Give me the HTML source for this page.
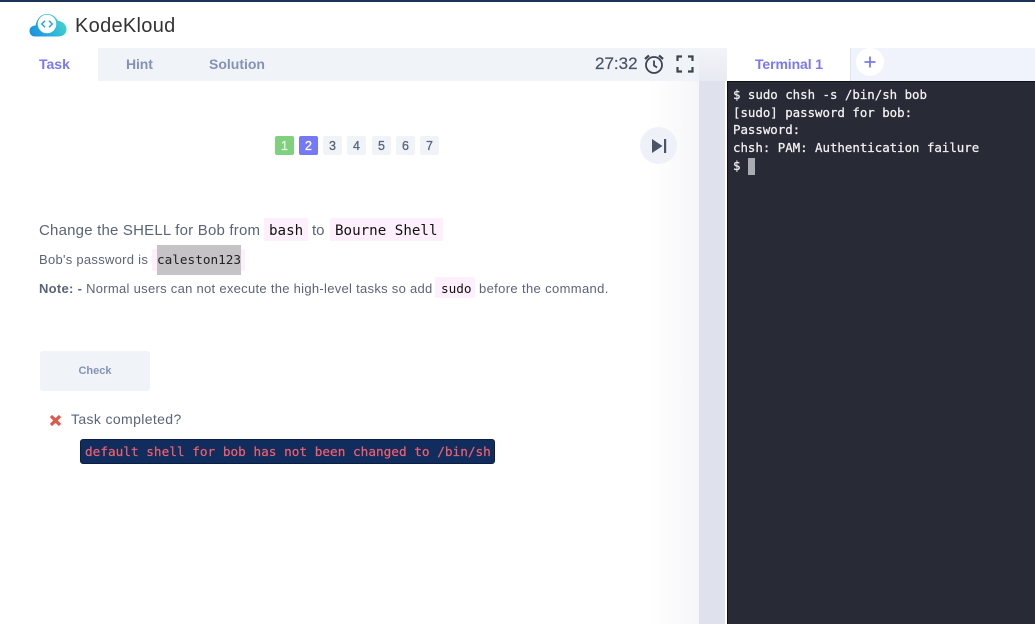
<!DOCTYPE html>
<html><head><meta charset="utf-8">
<style>
html,body{margin:0;padding:0;width:1035px;height:624px;overflow:hidden;background:#fff}
body{position:relative;font-family:"Liberation Sans",sans-serif;color:#5b6478}
.a{position:absolute;white-space:nowrap}
.m{font-family:"DejaVu Sans Mono","Liberation Mono",monospace}
.n{width:19px;height:19px;border-radius:2px;background:#f0f4f9;color:#5b6478;font-size:12.500px;text-align:center;line-height:20px;top:136px;position:absolute;-webkit-text-stroke:.3px currentColor}
.c{position:absolute;background:#fdeffb;border-radius:2px}
</style></head><body>
<div class="a" style="left:0;top:0;width:1035px;height:2px;background:#1c3157"></div>

<svg class="a" style="left:29px;top:13px" width="38" height="25" viewBox="0 0 38 25">
<defs><linearGradient id="g" x1="0" y1="0.700" x2="1" y2="0.300"><stop offset="0" stop-color="#1b94e0"/><stop offset=".5" stop-color="#2bb4dc"/><stop offset="1" stop-color="#47d8c8"/></linearGradient></defs>
<path d="M6 23.500C2.500 23.500 .5 21 .5 18C.5 14.500 3 12.500 6.500 12.500C8 5.500 12 1 18 1C23 1 27 4 29 8C34 8 37.500 12 37.500 16.500C37.500 21 33.500 23.500 29 23.500Z" fill="url(#g)"/>
<circle cx="18" cy="11" r="9.300" fill="#fff"/>
<path d="M16 7.800L12.800 11L16 14.200M20 7.800L23.200 11L20 14.200" fill="none" stroke="#25a9e3" stroke-width="1.500"/>
</svg>
<div class="a" style="left:75px;top:14px;font-size:20px;line-height:24px;color:#333;letter-spacing:.3px">KodeKloud</div>

<div class="a" style="left:98px;top:48px;width:601px;height:33px;background:#f0f4f9"></div>
<div class="a" style="left:39px;top:56px;font-size:14px;line-height:16px;font-weight:bold;color:#7b78f5">Task</div>
<div class="a" style="left:126px;top:56px;font-size:14px;line-height:16px;font-weight:bold;color:#8492b8;letter-spacing:-.1px">Hint</div>
<div class="a" style="left:209px;top:56px;font-size:14px;line-height:16px;font-weight:bold;color:#8492b8">Solution</div>
<div class="a" style="left:595px;top:54px;font-size:17px;line-height:20px;color:#4a5266;-webkit-text-stroke:.2px #4a5266">27:32</div>
<svg class="a" style="left:643px;top:53px" width="22" height="22" viewBox="0 0 22 22" fill="none" stroke="#3d4456" stroke-width="1.800">
<circle cx="11" cy="12" r="8"/><path d="M11 7.500V12.500L14 14.500"/><path d="M2 6L6 2.500M20 6L16 2.500" stroke-width="2.200"/>
</svg>
<svg class="a" style="left:676px;top:55px" width="18" height="18" viewBox="0 0 18 18" fill="none" stroke="#3d4456" stroke-width="2.200">
<path d="M1.500 6V1.500H6M12 1.500H16.500V6M16.500 12V16.500H12M6 16.500H1.500V12"/>
</svg>

<div class="a" style="left:699px;top:81px;width:26px;height:543px;background:#dfe2ec"></div>
<div class="a" style="left:648px;top:81px;width:51px;height:543px;background:linear-gradient(90deg,#fff,#f6f6f9)"></div>
<div class="a" style="left:699px;top:48px;width:28px;height:33px;background:linear-gradient(180deg,#f2f4f8,#e8eaf2)"></div>

<div class="a" style="left:850px;top:48px;width:185px;height:33px;background:#f0f3fb"></div>
<div class="a" style="left:727px;top:48px;width:123px;height:33px;background:#fff;border-radius:8px 0 0 0"></div>
<div class="a" style="left:850px;top:48px;width:1px;height:33px;background:#dfe3f7"></div>
<div class="a" style="left:755px;top:56px;font-size:14px;line-height:16px;font-weight:bold;color:#7b78f5;letter-spacing:-.1px">Terminal 1</div>
<svg class="a" style="left:856px;top:48px" width="28" height="28" viewBox="0 0 28 28">
<circle cx="14" cy="14" r="14" fill="#fff"/><path d="M14 8.500V19.500M8.500 14H19.500" stroke="#7b78f5" stroke-width="1.800"/></svg>

<div class="n" style="left:275px;background:#80d080;color:#e8fbe8">1</div>
<div class="n" style="left:299px;background:#7579f5;color:#fff">2</div>
<div class="n" style="left:323px">3</div>
<div class="n" style="left:347px">4</div>
<div class="n" style="left:372px">5</div>
<div class="n" style="left:396px">6</div>
<div class="n" style="left:420px">7</div>
<div class="a" style="left:640px;top:127px;width:37px;height:37px;border-radius:50%;background:#eef2f8"></div>
<svg class="a" style="left:651px;top:138px" width="16" height="16" viewBox="0 0 16 16"><path d="M1 1L11.500 8L1 15Z" fill="#4b5468"/><rect x="13" y="1" width="2.200" height="14" fill="#4b5468"/></svg>

<div class="a" style="left:39px;top:222px;font-size:15px;line-height:18px;letter-spacing:.2px">Change the SHELL for Bob from</div>
<div class="c" style="left:264px;top:218px;width:44px;height:23px"></div>
<div class="a m" style="left:269px;top:222px;font-size:14.200px;line-height:18px;color:#111">bash</div>
<div class="a" style="left:312px;top:222px;font-size:15px;line-height:18px">to</div>
<div class="c" style="left:330px;top:218px;width:113px;height:23px"></div>
<div class="a m" style="left:335px;top:222px;font-size:14.200px;line-height:18px;color:#111">Bourne Shell</div>

<div class="a" style="left:39px;top:252px;font-size:13px;line-height:16px;letter-spacing:.28px">Bob's password is</div>
<div class="c" style="left:152px;top:249px;width:93px;height:22px"></div>
<div class="a" style="left:157px;top:245px;width:84px;height:30px;background:#c5c3c5"></div>
<div class="a m" style="left:157px;top:252px;font-size:12.700px;line-height:16px;color:#222">caleston123</div>

<div class="a" style="left:39px;top:281px;font-size:13px;line-height:16px;letter-spacing:.29px"><b>Note: -</b> Normal users can not execute the high-level tasks so add</div>
<div class="c" style="left:435px;top:277px;width:40px;height:21px"></div>
<div class="a m" style="left:441px;top:281px;font-size:12.700px;line-height:16px;color:#111">sudo</div>
<div class="a" style="left:479px;top:281px;font-size:13px;line-height:16px;letter-spacing:.36px">before the command.</div>

<div class="a" style="left:40px;top:351px;width:110px;height:40px;background:#f0f4f9;border-radius:3px;text-align:center;font-size:11px;font-weight:bold;line-height:41px;color:#8492b8">Check</div>

<svg class="a" style="left:49px;top:414px" width="13" height="13" viewBox="0 0 13 13"><path d="M2 2L11 11M11 2L2 11" stroke="#e0584a" stroke-width="3.200"/></svg>
<div class="a" style="left:71px;top:411px;font-size:14px;line-height:17px;letter-spacing:.37px">Task completed?</div>
<div class="a" style="left:80px;top:439px;width:413px;height:23px;background:#112d5e;border-radius:3px;border:1px solid #0b1f44"></div>
<div class="a m" style="left:85px;top:444px;font-size:12.720px;line-height:16px;color:#f25f6c;-webkit-text-stroke:.2px #f25f6c">default shell for bob has not been changed to /bin/sh</div>

<div class="a" style="left:726px;top:81px;width:1px;height:543px;background:#fff"></div>
<div class="a" style="left:727px;top:81px;width:308px;height:543px;background:#282a36;border-top:1px solid #0e1016;border-left:1px solid #0e1016;box-sizing:border-box"></div>
<div class="a m" style="left:733px;top:86px;font-size:12.400px;line-height:17.700px;color:#f2f2f2;white-space:pre;-webkit-text-stroke:.25px #f2f2f2">$ sudo chsh -s /bin/sh bob
[sudo] password for bob:
Password:
chsh: PAM: Authentication failure
$ </div>
<div class="a" style="left:748px;top:158px;width:7px;height:17px;background:#a9abb0"></div>
</body></html>
